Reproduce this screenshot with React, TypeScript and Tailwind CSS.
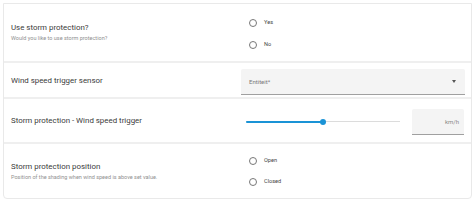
import React from "react";

function Radio({ label }: { label: string }) {
  return (
    <div className="flex items-center h-[8px]">
      <div className="w-[8px] h-[8px] rounded-full border border-[#777] box-border" />
      <span className="ml-[7px] text-[5.6px] leading-none text-[#444]">{label}</span>
    </div>
  );
}

function Label({ title, desc }: { title: string; desc?: string }) {
  return (
    <div className="w-[237px] pl-[7px] flex flex-col justify-center">
      <div className="text-[7.9px] leading-[9px] text-[#3a3a3a]">{title}</div>
      {desc && <div className="text-[5.5px] leading-[8px] mt-[2px] text-[#909090]">{desc}</div>}
    </div>
  );
}

function Sep() {
  return <div className="h-[2px] bg-[#efefef]" />;
}

export default function App() {
  return (
    <div className="w-[474px] h-[201px] bg-white overflow-hidden" style={{ fontFamily: "Roboto, 'Liberation Sans', sans-serif" }}>
      <div className="ml-[3px] mt-[3px] w-[469px] h-[196px] border border-[#e9e9e9] rounded-b-[4px] box-border flex flex-col">
        {/* Row 1 */}
        <div className="h-[57px] flex items-center">
          <Label title="Use storm protection?" desc="Would you like to use storm protection?" />
          <div className="flex flex-col gap-[13.5px] pl-[8px] pt-[3px]">
            <Radio label="Yes" />
            <Radio label="No" />
          </div>
        </div>
        <Sep />
        {/* Row 2 */}
        <div className="h-[34px] flex items-center">
          <Label title="Wind speed trigger sensor" />
          <div className="w-[224px] h-[26px] mt-[4px] bg-[#f4f4f4] border-b border-[#a0a0a0] rounded-t-[2px] flex items-center justify-between pl-[8px] pr-[9px] box-border">
            <span className="text-[6px] text-[#7a7a7a]">Entiteit*</span>
            <div className="w-0 h-0 border-l-[2.5px] border-r-[2.5px] border-t-[3px] border-l-transparent border-r-transparent border-t-[#555]" />
          </div>
        </div>
        <Sep />
        {/* Row 3 */}
        <div className="h-[43px] flex items-center">
          <Label title="Storm protection - Wind speed trigger" />
          <div className="flex items-center">
            <div className="relative w-[154px] h-[8px] ml-[5px] mt-[2px]">
              <div className="absolute left-0 right-0 top-[3.5px] h-[1px] bg-[#dcdcdc]" />
              <div className="absolute left-0 w-[77px] top-[3px] h-[2px] bg-[#1a93d6] rounded-full" />
              <div className="absolute left-[74px] top-[1px] w-[6px] h-[6px] rounded-full bg-[#1a93d6]" />
            </div>
            <div className="ml-[12px] mt-[2px] w-[52px] h-[26px] bg-[#f4f4f4] border-b border-[#a0a0a0] rounded-t-[2px] box-border flex items-center justify-end pr-[5px]">
              <span className="text-[6px] text-[#888]">km/h</span>
            </div>
          </div>
        </div>
        <Sep />
        {/* Row 4 */}
        <div className="flex-1 flex items-center">
          <Label title="Storm protection position" desc="Position of the shading when wind speed is above set value." />
          <div className="flex flex-col gap-[13px] pl-[8px] mt-[1px]">
            <Radio label="Open" />
            <Radio label="Closed" />
          </div>
        </div>
      </div>
    </div>
  );
}
